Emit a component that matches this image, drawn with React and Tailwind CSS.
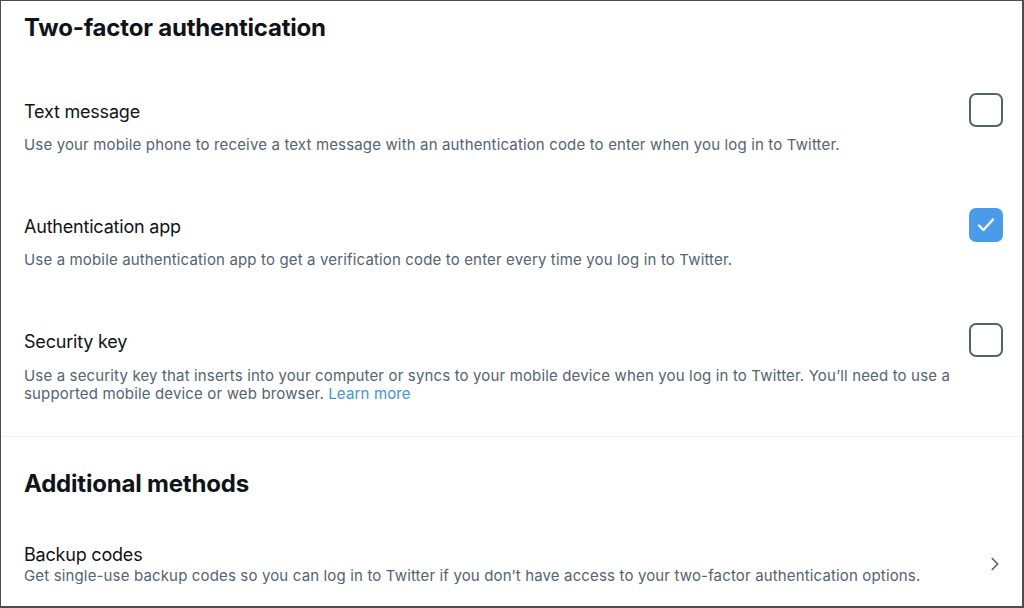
import { ChevronRight } from 'lucide-react'

const font = { fontFamily: 'Inter, "Noto Sans", sans-serif' }

function Checkbox({ checked }) {
  if (checked) {
    return (
      <div className="flex h-[34px] w-[34px] shrink-0 items-center justify-center rounded-[7px] bg-[#4a9be9]">
        <svg viewBox="0 0 24 24" className="h-[24px] w-[24px]" fill="none" stroke="white" strokeWidth="2.4" strokeLinecap="round" strokeLinejoin="round">
          <polyline points="5,12.5 9.5,17 19,6.5" />
        </svg>
      </div>
    )
  }
  return <div className="h-[34px] w-[34px] shrink-0 rounded-[7px] border-[2.5px] border-[#536471]" />
}

function Option({ title, children, checked, className, descGap = 'mt-3' }) {
  return (
    <div className={`flex items-start justify-between ${className}`}>
      <div className="flex-1">
        <div className="text-[18px] leading-[24px] tracking-[-0.2px] text-[#0f1419]">{title}</div>
        <div className={`${descGap} text-[15px] leading-[18px] tracking-[0.15px] text-[#536471]`}>{children}</div>
      </div>
      <div className="ml-4 -mt-[7px]">
        <Checkbox checked={checked} />
      </div>
    </div>
  )
}

export default function App() {
  return (
    <div className="h-[608px] w-[1024px] overflow-hidden bg-white" style={font}>
      <div className="h-full w-full border-t border-l border-r-2 border-b-2 border-[#4d4d4d]">
        <div className="pl-[23px] pr-[19px]">
          <h1 className="pt-[12px] text-[24px] font-bold leading-[30px] tracking-[-0.2px] text-[#0f1419]">Two-factor authentication</h1>

          <Option className="mt-[57px]" title="Text message">
            Use your mobile phone to receive a text message with an authentication code to enter when you log in to Twitter.
          </Option>

          <Option className="mt-[61px]" checked title="Authentication app">
            Use a mobile authentication app to get a verification code to enter every time you log in to Twitter.
          </Option>

          <Option className="mt-[61px]" descGap="mt-[13px]" title="Security key">
            Use a security key that inserts into your computer or syncs to your mobile device when you log in to Twitter. You’ll need to use a
            <br />
            supported mobile device or web browser. <span className="text-[#3b94e6]">Learn more</span>
          </Option>
        </div>

        <div className="mt-[33px] h-px bg-[#eff3f4]" />

        <div className="pl-[23px] pr-[19px]">
          <h2 className="mt-[32px] text-[24px] font-bold leading-[30px] tracking-[-0.2px] text-[#0f1419]">Additional methods</h2>
          <div className="mt-[44px] flex items-center justify-between">
            <div>
              <div className="text-[18px] leading-[24px] tracking-[-0.2px] text-[#0f1419]">Backup codes</div>
              <div className="text-[15px] leading-[18px] tracking-[0.15px] text-[#536471]">
                Get single-use backup codes so you can log in to Twitter if you don’t have access to your two-factor authentication options.
              </div>
            </div>
            <ChevronRight className="-mr-[3px] h-[22px] w-[22px] text-[#536471]" strokeWidth={1.8} />
          </div>
        </div>
      </div>
    </div>
  )
}
